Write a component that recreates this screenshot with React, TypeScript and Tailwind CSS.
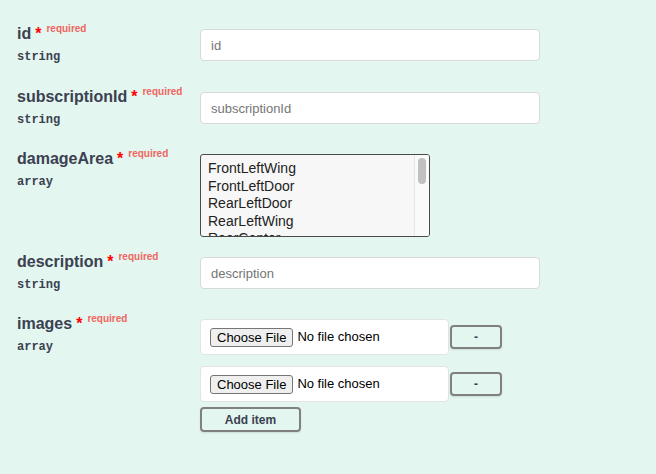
import React from "react";

const sans = { fontFamily: '"Liberation Sans", Arial, sans-serif' };

function FieldLabel({ name, type }: { name: string; type: string }) {
  return (
    <div className="w-[183px] shrink-0">
      <div className="flex items-start h-[20px] text-[16px] font-bold leading-[20px] text-[#3b4151]">
        <span>{name}</span>
        <span className="text-[#ff0000] ml-[4px]">*</span>
        <span className="text-[10px] font-bold leading-[12px] text-[#f06560] ml-[5px] mt-[-1px]">required</span>
      </div>
      <div className="mt-[5px] text-[12px] font-bold leading-[16px] text-[#3b4151] [font-family:'Liberation_Mono',monospace]">
        {type}
      </div>
    </div>
  );
}

function TextField({ placeholder }: { placeholder: string }) {
  return (
    <input
      type="text"
      placeholder={placeholder}
      className="w-[340px] h-[32px] px-[10px] text-[13px] text-[#3b4151] placeholder:text-[#757575] bg-white border border-[#d9d9d9] rounded-[4px] outline-none"
      style={sans}
    />
  );
}

function FileRow() {
  return (
    <div className="flex items-center gap-[1px]">
      <div className="w-[249px] h-[36px] bg-white border border-[#e3e3e3] rounded-[4px] flex items-center pl-[9px] text-[13px] text-black">
        <button className="h-[19px] px-[6px] bg-[#efefef] border border-[#767676] rounded-[3px] text-[13px] leading-[17px] text-black">
          Choose File
        </button>
        <span className="ml-[4px]">No file chosen</span>
      </div>
      <button className="w-[52px] h-[24px] border-2 border-[#808080] rounded-[4px] shadow-[0_1px_2px_rgba(0,0,0,0.1)] text-[12px] font-bold text-[#3b4151] leading-none">
        -
      </button>
    </div>
  );
}

const damageAreas = ["FrontLeftWing", "FrontLeftDoor", "RearLeftDoor", "RearLeftWing", "RearCenter", "RearRightWing"];

export default function App() {
  return (
    <div className="w-[656px] h-[474px] bg-[#e3f6f0] pt-[24px] px-[17px]" style={sans}>
      <div className="flex min-h-[63px]">
        <FieldLabel name="id" type="string" />
        <div className="pt-[5px]">
          <TextField placeholder="id" />
        </div>
      </div>

      <div className="flex min-h-[62px]">
        <FieldLabel name="subscriptionId" type="string" />
        <div className="pt-[5px]">
          <TextField placeholder="subscriptionId" />
        </div>
      </div>

      <div className="flex min-h-[103px]">
        <FieldLabel name="damageArea" type="array" />
        <div className="pt-[5px]">
          <div
            role="listbox"
            className="relative w-[230px] h-[83px] bg-[#f7f7f7] border border-[#4a4a4a] rounded-[3px] overflow-hidden flex"
          >
            <div className="flex-1 pt-[5px] pl-[7px] text-[14px] leading-[17.6px] text-[#222]">
              {damageAreas.map((a) => (
                <div key={a} role="option">
                  {a}
                </div>
              ))}
            </div>
            <div className="w-[15px] h-full border-l border-[#e6e6e6] bg-[#fafafa] flex justify-center pt-[3px]">
              <div className="w-[8px] h-[26px] rounded-full bg-[#c1c1c1]" />
            </div>
          </div>
        </div>
      </div>

      <div className="flex min-h-[62px]">
        <FieldLabel name="description" type="string" />
        <div className="pt-[5px]">
          <TextField placeholder="description" />
        </div>
      </div>

      <div className="flex">
        <FieldLabel name="images" type="array" />
        <div className="pt-[5px] flex flex-col gap-[11px]">
          <FileRow />
          <div>
            <FileRow />
            <button className="mt-[5px] w-[101px] h-[25px] border-2 border-[#808080] rounded-[4px] shadow-[0_1px_2px_rgba(0,0,0,0.1)] text-[12px] font-bold text-[#3b4151]">
              Add item
            </button>
          </div>
        </div>
      </div>
    </div>
  );
}
